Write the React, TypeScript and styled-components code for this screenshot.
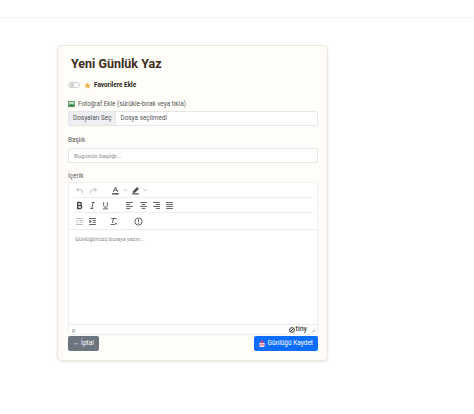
import * as React from "react"
import styled, { createGlobalStyle } from "styled-components"

const Global = createGlobalStyle`
  html, body { margin: 0; padding: 0; background: #fff; }
  * { box-sizing: border-box; }
  body { font-family: Roboto, "Noto Sans", sans-serif; }
`
const Page = styled.div`
  width: 474px;
  height: 414px;
  overflow: hidden;
`
const TopBar = styled.div`
  height: 18px;
  border-bottom: 1px solid #f3f3f3;
`
const Main = styled.main`
  padding: 27px 0 0 57px;
`
const Card = styled.div`
  width: 271px;
  height: 316px;
  padding: 8px 9px 0 10px;
  background: #fffdf9;
  border: 1px solid #eee8dc;
  border-radius: 5px;
  box-shadow: 0 1px 3px rgba(0, 0, 0, 0.1);
`
const Title = styled.h2`
  margin: 0 0 0 3px;
  height: 20px;
  font: 700 12.5px/20px Roboto, sans-serif;
  color: #3e2c1c;
`
const FavRow = styled.div`
  display: flex;
  align-items: center;
  gap: 3px;
  margin-top: 4px;
  height: 14px;
`
const Toggle = styled.span`
  width: 12px;
  height: 6px;
  margin-right: 1px;
  border: 1px solid #d0d0d0;
  border-radius: 3px;
  background: #fff;
  display: flex;
  align-items: center;
  padding-left: 1px;
  &::before {
    content: "";
    width: 4px;
    height: 4px;
    border-radius: 50%;
    background: #c9c9c9;
  }
`
const FavText = styled.span`
  font: 700 6.4px/14px Roboto, sans-serif;
  color: #2c2620;
`
const Label = styled.label<{ $top: number }>`
  display: flex;
  align-items: center;
  gap: 3px;
  margin-top: ${p => p.$top}px;
  height: 10px;
  font: 400 6.4px/10px Roboto, sans-serif;
  color: #555;
`
const FileField = styled.div`
  display: flex;
  align-items: center;
  margin-top: 2px;
  height: 15px;
  background: #fff;
  border: 1px solid #e6e6e6;
  border-radius: 2px;
  font: 400 6.4px/13px Roboto, sans-serif;
  color: #555;
`
const FileButton = styled.span`
  height: 100%;
  padding: 0 4px;
  background: #edeff2;
  border-right: 1px solid #e6e6e6;
`
const FileName = styled.span`
  padding-left: 4px;
`
const TextField = styled.div`
  margin-top: 3px;
  height: 15px;
  padding-left: 5px;
  background: #fff;
  border: 1px solid #e6e6e6;
  border-radius: 2px;
  font: 400 6px/13px Roboto, sans-serif;
  color: #8d8d8d;
`
const Editor = styled.div`
  margin-top: 1px;
  height: 153px;
  display: flex;
  flex-direction: column;
  background: #fff;
  border: 1px solid #f0f0f0;
  border-radius: 2px;
`
const ToolbarRow = styled.div`
  display: flex;
  align-items: center;
  height: 15px;
  margin: 0 4px;
  border-bottom: 1px solid #eeeeee;
  &:nth-child(3) {
    height: 16px;
    border-bottom: 0;
  }
`
const Tool = styled.span<{ $gap?: number; $off?: boolean }>`
  display: flex;
  align-items: center;
  justify-content: center;
  width: 13px;
  height: 13px;
  margin-left: ${p => p.$gap ?? 0}px;
  color: ${p => (p.$off ? "#b0b0b0" : "#444")};
  svg { display: block; }
`
const Caret = styled.span`
  display: flex;
  width: 7px;
  color: #aaa;
`
const EditArea = styled.div`
  flex: 1;
  padding: 4px 6px;
  border-top: 1px solid #eeeeee;
  font: 400 5.6px/10px Roboto, sans-serif;
  color: #8b8b8b;
`
const StatusBar = styled.div`
  height: 10px;
  flex: none;
  display: flex;
  align-items: center;
  justify-content: space-between;
  padding: 0 1px 0 3px;
  border-top: 1px solid #e8e8e8;
  font: 400 6px/9px Roboto, sans-serif;
  color: #888;
`
const Tiny = styled.span`
  display: flex;
  align-items: center;
  gap: 1px;
  font: 500 7px/9px Roboto, sans-serif;
  color: #444;
`
const Grip = styled.svg`
  margin-left: 2px;
`
const Actions = styled.div`
  display: flex;
  justify-content: space-between;
  margin-top: 1px;
`
const Button = styled.button<{ $primary?: boolean }>`
  display: flex;
  align-items: center;
  gap: 3px;
  height: 15px;
  padding: 0 5px;
  border: 0;
  border-radius: 2px;
  font: 400 6.5px/15px Roboto, sans-serif;
  color: #fff;
  background: ${p => (p.$primary ? "#0d6efd" : "#6c757d")};
`

const I = ({ children }: { children: React.ReactNode }) => (
  <svg width="9" height="9" viewBox="0 0 24 24" fill="none" stroke="currentColor" strokeWidth="2.2">
    {children}
  </svg>
)

const Lines = ({ rows }: { rows: [number, number][] }) => (
  <I>
    {rows.map(([a, b], i) => (
      <path key={i} d={`M${a} ${4 + i * 5.3}H${b}`} />
    ))}
  </I>
)

const Down = () => (
  <Caret>
    <svg width="6" height="6" viewBox="0 0 24 24" fill="none" stroke="currentColor" strokeWidth="2.5">
      <path d="M4 8l8 8 8-8" />
    </svg>
  </Caret>
)

export default function App() {
  return (
    <Page>
      <Global />
      <TopBar />
      <Main>
        <Card>
          <Title>Yeni Günlük Yaz</Title>
          <FavRow>
            <Toggle />
            <svg width="7" height="7" viewBox="0 0 24 24" fill="#eeb33f">
              <path d="M12 1l3.4 7.2 7.6 1-5.600 5.400 1.400 7.900L12 17.700 5.200 21.500l1.400-7.900L1 9.200l7.600-1z" />
            </svg>
            <FavText>Favorilere Ekle</FavText>
          </FavRow>
          <Label $top={7}>
            <svg width="7" height="6" viewBox="0 0 16 14">
              <rect width="16" height="14" fill="#5c9a63" />
              <rect x="2" y="2" width="12" height="6" fill="#bfe0c0" />
              <path d="M2 12l4-5 3 3 2-2 3 4z" fill="#2f7a44" />
            </svg>
            Fotoğraf Ekle (sürükle-bırak veya tıkla)
          </Label>
          <FileField>
            <FileButton>Dosyaları Seç</FileButton>
            <FileName>Dosya seçilmedi</FileName>
          </FileField>
          <Label $top={9}>Başlık</Label>
          <TextField>Bugünün başlığı...</TextField>
          <Label $top={8}>İçerik</Label>
          <Editor>
            <ToolbarRow>
              <Tool $off><I><path d="M9 5L4 10l5 5M4 10h10a6 6 0 0 1 6 6v3" /></I></Tool>
              <Tool $off $gap={1}><I><path d="M15 5l5 5-5 5M20 10H10a6 6 0 0 0-6 6v3" /></I></Tool>
              <Tool $gap={9}>
                <I>
                  <path d="M6 16L12 3l6 13M8 11h8" />
                  <path d="M3 21h18" stroke="#222" strokeWidth="3" />
                </I>
              </Tool>
              <Down />
              <Tool>
                <I>
                  <path d="M5 16L16 4l4 4L9 18z" fill="currentColor" />
                  <path d="M3 21h18" strokeWidth="3" />
                </I>
              </Tool>
              <Down />
            </ToolbarRow>
            <ToolbarRow>
              <Tool><I><path d="M7 4h6a4 4 0 0 1 0 8H7zM7 12h7a4 4 0 0 1 0 8H7z" strokeWidth="3.400" /></I></Tool>
              <Tool><I><path d="M10 4h8M6 20h8M14 4l-4 16" /></I></Tool>
              <Tool><I><path d="M7 3v9a5 5 0 0 0 10 0V3M5 21h14" /></I></Tool>
              <Tool $gap={11}><Lines rows={[[3, 21], [3, 14], [3, 21], [3, 14]]} /></Tool>
              <Tool $gap={1}><Lines rows={[[3, 21], [7, 17], [3, 21], [7, 17]]} /></Tool>
              <Tool><Lines rows={[[3, 21], [10, 21], [3, 21], [10, 21]]} /></Tool>
              <Tool><Lines rows={[[3, 21], [3, 21], [3, 21], [3, 21]]} /></Tool>
            </ToolbarRow>
            <ToolbarRow>
              <Tool $off><I><path d="M3 4h18M12 9h9M12 14h9M3 20h18M8 8l-4 4 4 4" /></I></Tool>
              <Tool><I><path d="M3 4h18M12 9h9M12 14h9M3 20h18M4 8l4 4-4 4" fill="currentColor" /></I></Tool>
              <Tool $gap={8}><I><path d="M6 4h14M12 4L9 16M4 20h12M16 15l5 5M21 15l-5 5" /></I></Tool>
              <Tool $gap={12}><I><circle cx="12" cy="12" r="9.500" /><path d="M12 6v8M12 16v2" /></I></Tool>
            </ToolbarRow>
            <EditArea>Günlüğünüzü buraya yazın...</EditArea>
            <StatusBar>
              <span>p</span>
              <Tiny>
                <svg width="6" height="6" viewBox="0 0 24 24" fill="none" stroke="#333" strokeWidth="4">
                  <circle cx="12" cy="12" r="9.500" />
                  <path d="M6 18L18 6" />
                </svg>
                tiny
                <Grip width="6" height="6" viewBox="0 0 10 10" stroke="#999" strokeWidth="1">
                  <path d="M9 3L3 9M9 6L6 9" />
                </Grip>
              </Tiny>
            </StatusBar>
          </Editor>
          <Actions>
            <Button>← İptal</Button>
            <Button $primary>
              <svg width="6" height="8" viewBox="0 0 14 16">
                <rect x="1" y="5" width="12" height="10" rx="1" fill="#f2d7e4" />
                <rect x="4" y="0" width="6" height="6" fill="#d9436c" />
                <rect x="1" y="9" width="12" height="2" fill="#d9436c" />
              </svg>
              Günlüğü Kaydet
            </Button>
          </Actions>
        </Card>
      </Main>
    </Page>
  )
}
